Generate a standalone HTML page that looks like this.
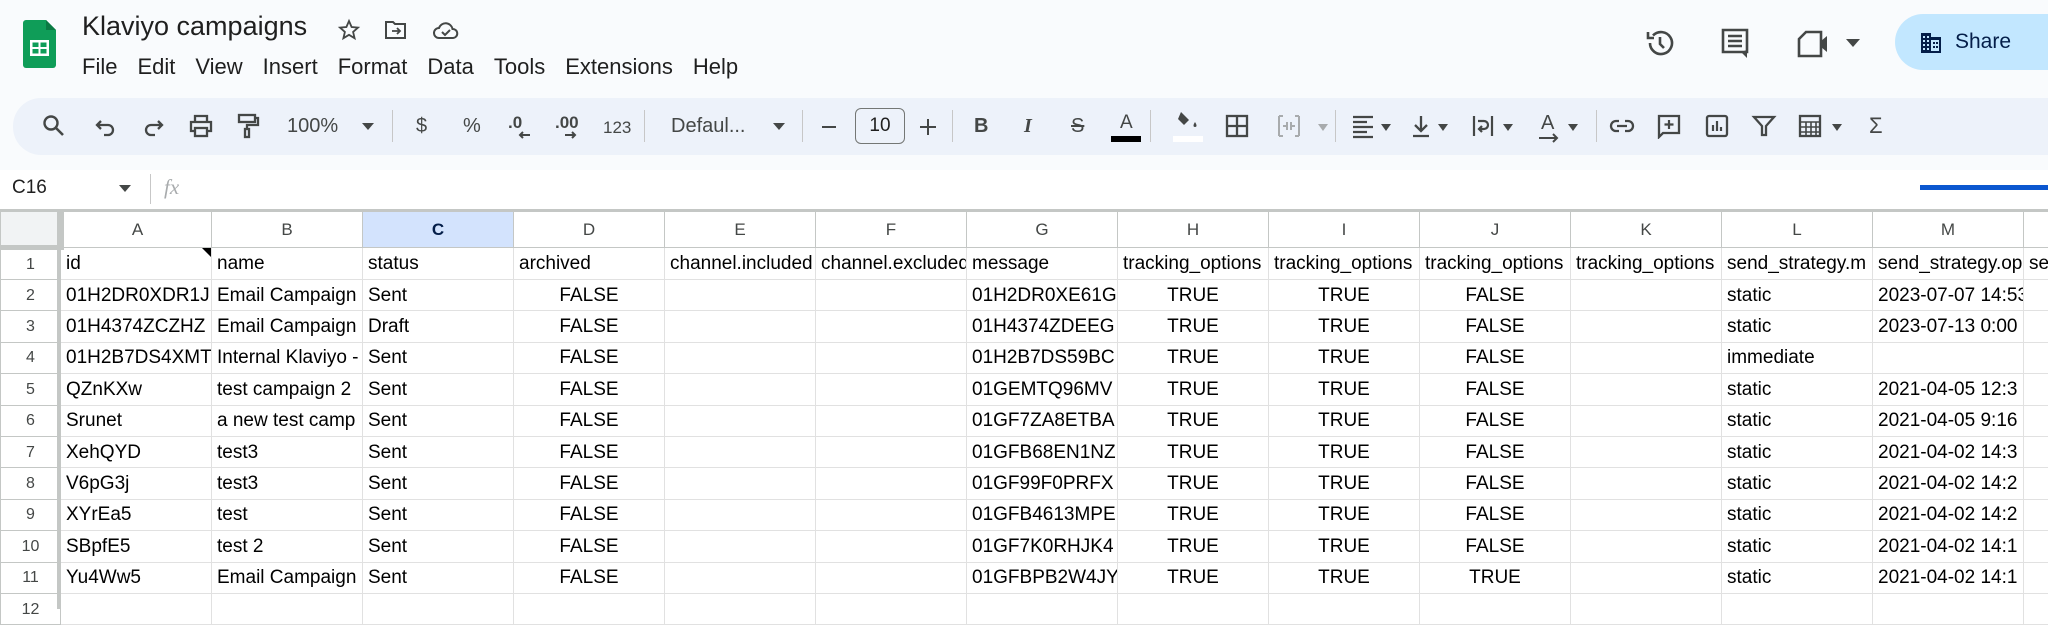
<!DOCTYPE html>
<html><head><meta charset="utf-8">
<style>
*{box-sizing:border-box;margin:0;padding:0}
body{width:2048px;height:609px;overflow:hidden;background:#fff;font-family:"Liberation Sans",Arial,sans-serif;position:relative;color:#1f1f1f}
.top{position:absolute;left:0;top:0;width:2048px;height:170px;background:#f9fbfd}
.abs{position:absolute}
.title{left:82px;top:11px;font-size:27px;color:#1f1f1f}
.menu{left:82px;top:54px;font-size:22px;color:#1f1f1f;display:flex;gap:0}
.menu span{margin-right:20px}
.tb{left:13px;top:98px;width:2035px;height:57px;background:#edf2fa;border-radius:28px 0 0 28px}
.ic{position:absolute;top:113px;width:26px;height:26px}
.tt{position:absolute;top:115px;font-size:20px;color:#444746}
.sep{position:absolute;top:110px;width:1px;height:32px;background:#c7c7c7}
.share{left:1895px;top:14px;width:180px;height:56px;border-radius:28px;background:#c2e7ff}
table{position:absolute;left:0;top:211px;border-collapse:collapse;table-layout:fixed;width:2123px}
td{border:1px solid #e1e1e1;height:31.4px;font-size:19px;padding:0 5px;white-space:nowrap;overflow:hidden;text-overflow:clip;color:#000;line-height:29px}
td.c{text-align:center}
tr.h td{height:36px;text-align:center;color:#444746;font-size:17px;border-color:#c4c7c5;background:#fff}
td.rh{text-align:center;color:#444746;font-size:16px;border-color:#c4c7c5;padding:0}
tr.h td.sel{background:#d3e3fd;font-weight:bold;color:#041e49}
</style></head><body>
<div class="top"></div>
<svg class="abs" style="left:23px;top:20px" width="33" height="48" viewBox="0 0 33 48">
<path d="M3 0h20l10 10v35a3 3 0 0 1-3 3H3a3 3 0 0 1-3-3V3a3 3 0 0 1 3-3z" fill="#0f9d58"/>
<path d="M23 0l10 10H23z" fill="#0a7a43"/>
<rect x="7" y="20" width="19" height="16" fill="#fff"/>
<rect x="9.5" y="22.5" width="6" height="4.5" fill="#0f9d58"/><rect x="17.5" y="22.5" width="6" height="4.5" fill="#0f9d58"/>
<rect x="9.5" y="29" width="6" height="4.5" fill="#0f9d58"/><rect x="17.5" y="29" width="6" height="4.5" fill="#0f9d58"/>
</svg>
<div class="abs title">Klaviyo campaigns</div>
<svg class="abs" style="left:337px;top:18px" width="24" height="24" viewBox="0 0 24 24"><path d="M12 3l2.6 6 6.4.6-4.9 4.3 1.5 6.3L12 16.8 6.4 20.2l1.5-6.3L3 9.6l6.4-.6z" fill="none" stroke="#444746" stroke-width="1.8"/></svg>
<svg class="abs" style="left:384px;top:19px" width="24" height="22" viewBox="0 0 24 22"><path d="M2 3h7l2 2h10v14H2z" fill="none" stroke="#444746" stroke-width="2"/><path d="M8 12h8M13 9l3 3-3 3" fill="none" stroke="#444746" stroke-width="1.8"/></svg>
<svg class="abs" style="left:432px;top:19px" width="28" height="22" viewBox="0 0 28 22"><path d="M7 19a5 5 0 0 1 0-10 7 7 0 0 1 13.5 1A4.5 4.5 0 0 1 21 19z" fill="none" stroke="#444746" stroke-width="2"/><path d="M10 13l3 3 5-5" fill="none" stroke="#444746" stroke-width="2"/></svg>
<div class="abs menu"><span>File</span><span>Edit</span><span>View</span><span>Insert</span><span>Format</span><span>Data</span><span>Tools</span><span>Extensions</span><span>Help</span></div>

<svg class="abs" style="left:1644px;top:27px" width="32" height="32" viewBox="0 0 32 32"><path d="M6 16a11 11 0 1 0 3-7.5" fill="none" stroke="#444746" stroke-width="2.6"/><path d="M4 5v6h6" fill="none" stroke="#444746" stroke-width="2.6"/><path d="M16 10v7l4 4" fill="none" stroke="#444746" stroke-width="2.6"/></svg>
<svg class="abs" style="left:1721px;top:28px" width="28" height="32" viewBox="0 0 28 32"><path d="M2 2h24v22H6l-4 0z" fill="none" stroke="#444746" stroke-width="2.6"/><path d="M20 24l6 6V22" fill="#444746"/><path d="M7 8h14M7 13h14M7 18h14" stroke="#444746" stroke-width="2.4"/></svg>
<svg class="abs" style="left:1797px;top:30px" width="36" height="28" viewBox="0 0 36 28"><path d="M9 2h15v24H2V9z" fill="none" stroke="#444746" stroke-width="2.6"/><path d="M24 11l6-5v16l-6-5z" fill="#444746"/></svg>
<svg class="abs" style="left:1846px;top:39px" width="14" height="9" viewBox="0 0 14 9"><path d="M0 0h14L7 8z" fill="#444746"/></svg>
<div class="abs share"></div>
<svg class="abs" style="left:1920px;top:32px" width="22" height="22" viewBox="0 0 22 22"><path d="M1 1h10v4h10v16H1z" fill="#041e49"/><g fill="#c2e7ff"><rect x="3" y="4" width="2" height="2"/><rect x="7" y="4" width="2" height="2"/><rect x="3" y="8" width="2" height="2"/><rect x="7" y="8" width="2" height="2"/><rect x="3" y="12" width="2" height="2"/><rect x="7" y="12" width="2" height="2"/><rect x="3" y="16" width="2" height="2"/><rect x="7" y="16" width="2" height="2"/><rect x="11" y="8" width="8" height="11"/></g><g fill="#041e49"><rect x="13" y="10" width="2" height="2"/><rect x="13" y="14" width="2" height="2"/><rect x="16" y="10" width="2" height="2"/><rect x="16" y="14" width="2" height="2"/></g></svg>
<div class="abs" style="left:1955px;top:30px;font-size:21px;color:#041e49">Share</div>

<div class="abs tb"></div>
<svg class="ic" style="left:41px" viewBox="0 0 26 26"><circle cx="10" cy="10" r="6.5" fill="none" stroke="#444746" stroke-width="2.4"/><path d="M15 15l7 7" stroke="#444746" stroke-width="2.6"/></svg>
<svg class="ic" style="left:93px" viewBox="0 0 26 26"><path d="M8 8l-4 4 4 4M4 12h11a5 5 0 0 1 0 10h-4" fill="none" stroke="#444746" stroke-width="2.3"/></svg>
<svg class="ic" style="left:140px" viewBox="0 0 26 26"><path d="M18 8l4 4-4 4M22 12H11a5 5 0 0 0 0 10h4" fill="none" stroke="#444746" stroke-width="2.3"/></svg>
<svg class="ic" style="left:188px" viewBox="0 0 26 26"><path d="M7 8V3h12v5M7 18H3V9h20v9h-4" fill="none" stroke="#444746" stroke-width="2.3"/><rect x="7" y="15" width="12" height="8" fill="none" stroke="#444746" stroke-width="2.3"/></svg>
<svg class="ic" style="left:235px" viewBox="0 0 26 26"><rect x="4" y="2" width="16" height="7" fill="none" stroke="#444746" stroke-width="2.3"/><path d="M20 5h3v7H12v4" fill="none" stroke="#444746" stroke-width="2.3"/><rect x="10" y="16" width="4" height="8" fill="none" stroke="#444746" stroke-width="2.3"/></svg>
<div class="tt" style="left:287px">100%</div>
<svg class="abs" style="left:362px;top:123px" width="12" height="7"><path d="M0 0h12L6 7z" fill="#444746"/></svg>
<div class="sep" style="left:392px"></div>
<div class="tt" style="left:416px">$</div>
<div class="tt" style="left:463px">%</div>
<div class="tt" style="left:508px;font-weight:bold;font-size:17px;top:113px">.0</div>
<svg class="abs" style="left:518px;top:130px" width="12" height="10"><path d="M12 5H2M5 2L2 5l3 3" fill="none" stroke="#444746" stroke-width="2"/></svg>
<div class="tt" style="left:555px;font-weight:bold;font-size:17px;top:113px">.00</div>
<svg class="abs" style="left:565px;top:130px" width="12" height="10"><path d="M0 5h10M7 2l3 3-3 3" fill="none" stroke="#444746" stroke-width="2"/></svg>
<div class="tt" style="left:603px;font-size:17px;top:118px">123</div>
<div class="sep" style="left:644px"></div>
<div class="tt" style="left:671px">Defaul...</div>
<svg class="abs" style="left:773px;top:123px" width="12" height="7"><path d="M0 0h12L6 7z" fill="#444746"/></svg>
<div class="sep" style="left:802px"></div>
<div class="abs" style="left:822px;top:126px;width:14px;height:2px;background:#444746"></div>
<div class="abs" style="left:855px;top:108px;width:50px;height:36px;border:1.5px solid #747775;border-radius:6px;font-size:19px;text-align:center;line-height:33px;color:#1f1f1f">10</div>
<div class="abs" style="left:920px;top:126px;width:16px;height:2px;background:#444746"></div>
<div class="abs" style="left:927px;top:119px;width:2px;height:16px;background:#444746"></div>
<div class="sep" style="left:952px"></div>
<div class="tt" style="left:974px;font-weight:bold;font-size:20px">B</div>
<div class="tt" style="left:1024px;font-style:italic;font-size:20px;font-family:'Liberation Serif',serif;font-weight:bold">I</div>
<div class="tt" style="left:1071px;font-size:20px;text-decoration:line-through">S</div>
<div class="tt" style="left:1120px;top:112px;font-size:19px">A</div>
<div class="abs" style="left:1111px;top:136px;width:30px;height:6px;background:#000"></div>
<div class="sep" style="left:1150px"></div>
<svg class="ic" style="left:1175px;top:108px" viewBox="0 0 26 26"><path d="M6 4l8 8-5 5-6-6z" fill="#444746"/><path d="M20 14c-2 3-2 5 0 5s2-2 0-5z" fill="#444746"/></svg>
<div class="abs" style="left:1173px;top:136px;width:30px;height:6px;background:#fff"></div>
<svg class="ic" style="left:1224px" viewBox="0 0 26 26"><rect x="3" y="3" width="20" height="20" fill="none" stroke="#444746" stroke-width="2.3"/><path d="M13 3v20M3 13h20" stroke="#444746" stroke-width="2.3"/></svg>
<svg class="ic" style="left:1276px" viewBox="0 0 26 26"><path d="M3 3h4M3 23h4M3 3v20M23 3v20M19 3h4M19 23h4M7 13h4M15 13h4M11 9v8M15 9v8" fill="none" stroke="#a8abad" stroke-width="2"/></svg>
<svg class="abs" style="left:1318px;top:124px" width="10" height="7"><path d="M0 0h10L5 7z" fill="#a8abad"/></svg>
<div class="sep" style="left:1335px"></div>
<svg class="ic" style="left:1350px" viewBox="0 0 26 26"><path d="M3 4h20M3 9h14M3 14h20M3 19h14M3 24h20" stroke="#444746" stroke-width="2.2"/></svg>
<svg class="abs" style="left:1381px;top:124px" width="10" height="7"><path d="M0 0h10L5 7z" fill="#444746"/></svg>
<svg class="ic" style="left:1408px" viewBox="0 0 26 26"><path d="M13 3v15M7 12l6 6 6-6M5 23h16" fill="none" stroke="#444746" stroke-width="2.3"/></svg>
<svg class="abs" style="left:1438px;top:124px" width="10" height="7"><path d="M0 0h10L5 7z" fill="#444746"/></svg>
<svg class="ic" style="left:1470px" viewBox="0 0 26 26"><path d="M4 3v20M22 3v20M8 8h6a4 4 0 0 1 0 8h-4M12 13l-3 3 3 3" fill="none" stroke="#444746" stroke-width="2.2"/></svg>
<svg class="abs" style="left:1503px;top:124px" width="10" height="7"><path d="M0 0h10L5 7z" fill="#444746"/></svg>
<div class="tt" style="left:1541px;top:112px">A</div>
<svg class="abs" style="left:1539px;top:133px" width="22" height="10"><path d="M0 5h18M14 1l4 4-4 4" fill="none" stroke="#444746" stroke-width="2"/></svg>
<svg class="abs" style="left:1568px;top:124px" width="10" height="7"><path d="M0 0h10L5 7z" fill="#444746"/></svg>
<div class="sep" style="left:1596px"></div>
<svg class="ic" style="left:1609px" viewBox="0 0 26 26"><path d="M10 8H7a5 5 0 0 0 0 10h3M16 8h3a5 5 0 0 1 0 10h-3M8 13h10" fill="none" stroke="#444746" stroke-width="2.3"/></svg>
<svg class="ic" style="left:1656px" viewBox="0 0 26 26"><path d="M3 3h20v17H7l-4 4z" fill="none" stroke="#444746" stroke-width="2.3"/><path d="M13 7v9M8.5 11.5h9" stroke="#444746" stroke-width="2.2"/></svg>
<svg class="ic" style="left:1704px" viewBox="0 0 26 26"><rect x="3" y="3" width="20" height="20" rx="2" fill="none" stroke="#444746" stroke-width="2.3"/><path d="M9 12v6M13 8v10M17 14v4" stroke="#444746" stroke-width="2.2"/></svg>
<svg class="ic" style="left:1751px" viewBox="0 0 26 26"><path d="M3 4h20l-8 9v9h-4v-9z" fill="none" stroke="#444746" stroke-width="2.3"/></svg>
<svg class="ic" style="left:1797px" viewBox="0 0 26 26"><rect x="3" y="3" width="20" height="20" fill="none" stroke="#444746" stroke-width="2.3"/><path d="M3 9h20M3 14h20M3 19h20M9 9v14M14 9v14M19 9v14" stroke="#444746" stroke-width="1.6"/></svg>
<svg class="abs" style="left:1832px;top:124px" width="10" height="7"><path d="M0 0h10L5 7z" fill="#444746"/></svg>
<div class="tt" style="left:1869px;top:113px;font-size:22px">Σ</div>

<div class="abs" style="left:12px;top:177px;font-size:19px;color:#1f1f1f">C16</div>
<svg class="abs" style="left:119px;top:185px" width="12" height="7"><path d="M0 0h12L6 7z" fill="#444746"/></svg>
<div class="abs" style="left:150px;top:174px;width:1px;height:30px;background:#c7c7c7"></div>
<div class="abs" style="left:164px;top:175px;font-size:21px;color:#a8abad;font-style:italic;font-family:'Liberation Serif',serif">fx</div>
<div class="abs" style="left:1920px;top:185px;width:128px;height:5px;background:#0b57d0"></div>
<div class="abs" style="left:0;top:209px;width:2048px;height:2px;background:#c4c7c5"></div>

<table>
<colgroup><col style="width:60px"><col style="width:151px"><col style="width:151px"><col style="width:151px"><col style="width:151px"><col style="width:151px"><col style="width:151px"><col style="width:151px"><col style="width:151px"><col style="width:151px"><col style="width:151px"><col style="width:151px"><col style="width:151px"><col style="width:151px"><col style="width:100px"></colgroup>
<tr class="h"><td style="background:#f1f3f4;border-right:7px solid #c4c7c5;border-bottom:5px solid #c4c7c5"></td><td>A</td><td>B</td><td class="sel">C</td><td>D</td><td>E</td><td>F</td><td>G</td><td>H</td><td>I</td><td>J</td><td>K</td><td>L</td><td>M</td><td>N</td></tr>
<tr><td class="rh">1</td><td style="position:relative">id<span style="position:absolute;right:0;top:0;border-top:9px solid #000;border-left:9px solid transparent"></span></td><td>name</td><td>status</td><td>archived</td><td>channel.included</td><td>channel.excluded</td><td>message</td><td>tracking_options</td><td>tracking_options</td><td>tracking_options</td><td>tracking_options</td><td>send_strategy.m</td><td>send_strategy.op</td><td>se</td></tr>
<tr><td class="rh">2</td><td>01H2DR0XDR1J</td><td>Email Campaign</td><td>Sent</td><td class="c">FALSE</td><td></td><td></td><td>01H2DR0XE61G</td><td class="c">TRUE</td><td class="c">TRUE</td><td class="c">FALSE</td><td></td><td>static</td><td>2023-07-07 14:53</td><td></td></tr>
<tr><td class="rh">3</td><td>01H4374ZCZHZ</td><td>Email Campaign</td><td>Draft</td><td class="c">FALSE</td><td></td><td></td><td>01H4374ZDEEG</td><td class="c">TRUE</td><td class="c">TRUE</td><td class="c">FALSE</td><td></td><td>static</td><td>2023-07-13 0:00</td><td></td></tr>
<tr><td class="rh">4</td><td>01H2B7DS4XMT</td><td>Internal Klaviyo - </td><td>Sent</td><td class="c">FALSE</td><td></td><td></td><td>01H2B7DS59BC</td><td class="c">TRUE</td><td class="c">TRUE</td><td class="c">FALSE</td><td></td><td>immediate</td><td></td><td></td></tr>
<tr><td class="rh">5</td><td>QZnKXw</td><td>test campaign 2</td><td>Sent</td><td class="c">FALSE</td><td></td><td></td><td>01GEMTQ96MV</td><td class="c">TRUE</td><td class="c">TRUE</td><td class="c">FALSE</td><td></td><td>static</td><td>2021-04-05 12:3</td><td></td></tr>
<tr><td class="rh">6</td><td>Srunet</td><td>a new test camp</td><td>Sent</td><td class="c">FALSE</td><td></td><td></td><td>01GF7ZA8ETBA</td><td class="c">TRUE</td><td class="c">TRUE</td><td class="c">FALSE</td><td></td><td>static</td><td>2021-04-05 9:16</td><td></td></tr>
<tr><td class="rh">7</td><td>XehQYD</td><td>test3</td><td>Sent</td><td class="c">FALSE</td><td></td><td></td><td>01GFB68EN1NZ</td><td class="c">TRUE</td><td class="c">TRUE</td><td class="c">FALSE</td><td></td><td>static</td><td>2021-04-02 14:3</td><td></td></tr>
<tr><td class="rh">8</td><td>V6pG3j</td><td>test3</td><td>Sent</td><td class="c">FALSE</td><td></td><td></td><td>01GF99F0PRFX</td><td class="c">TRUE</td><td class="c">TRUE</td><td class="c">FALSE</td><td></td><td>static</td><td>2021-04-02 14:2</td><td></td></tr>
<tr><td class="rh">9</td><td>XYrEa5</td><td>test</td><td>Sent</td><td class="c">FALSE</td><td></td><td></td><td>01GFB4613MPE</td><td class="c">TRUE</td><td class="c">TRUE</td><td class="c">FALSE</td><td></td><td>static</td><td>2021-04-02 14:2</td><td></td></tr>
<tr><td class="rh">10</td><td>SBpfE5</td><td>test 2</td><td>Sent</td><td class="c">FALSE</td><td></td><td></td><td>01GF7K0RHJK4</td><td class="c">TRUE</td><td class="c">TRUE</td><td class="c">FALSE</td><td></td><td>static</td><td>2021-04-02 14:1</td><td></td></tr>
<tr><td class="rh">11</td><td>Yu4Ww5</td><td>Email Campaign</td><td>Sent</td><td class="c">FALSE</td><td></td><td></td><td>01GFBPB2W4JY</td><td class="c">TRUE</td><td class="c">TRUE</td><td class="c">TRUE</td><td></td><td>static</td><td>2021-04-02 14:1</td><td></td></tr>
<tr><td class="rh">12</td><td></td><td></td><td></td><td></td><td></td><td></td><td></td><td></td><td></td><td></td><td></td><td></td><td></td><td></td></tr>
</table>
<div class="abs" style="left:57px;top:211px;width:3px;height:398px;background:#c4c7c5"></div>
</body></html>
